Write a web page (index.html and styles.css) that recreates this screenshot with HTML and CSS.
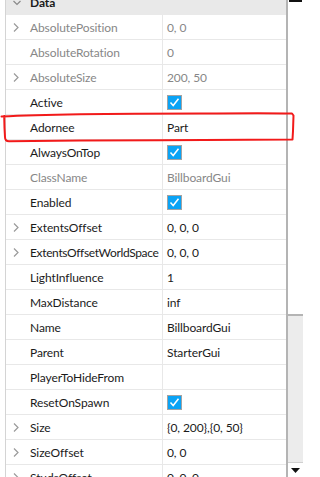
FILE: index.html
```html
<!DOCTYPE html>
<html>
<head>
<meta charset="utf-8">
<link rel="stylesheet" href="styles.css">
</head>
<body>
<div class="window">
  <div class="panel">
    <div class="list">
      <div class="header">
        <span class="chev down"><svg width="8" height="6" viewBox="0 0 8 6"><path d="M0.5 1 L4 4.5 L7.5 1" fill="none" stroke="#8a8a8a" stroke-width="1.2"/></svg></span>
        <span class="hlabel">Data</span>
      </div>
      <div class="row ro"><div class="name"><span class="chev"><svg width="6" height="9" viewBox="0 0 6 9"><path d="M1 0.5 L5 4.5 L1 8.5" fill="none" stroke="#9a9a9a" stroke-width="1.2"/></svg></span>AbsolutePosition</div><div class="val">0, 0</div></div>
      <div class="row ro"><div class="name"><span class="chev"></span>AbsoluteRotation</div><div class="val">0</div></div>
      <div class="row ro"><div class="name"><span class="chev"><svg width="6" height="9" viewBox="0 0 6 9"><path d="M1 0.5 L5 4.5 L1 8.5" fill="none" stroke="#9a9a9a" stroke-width="1.2"/></svg></span>AbsoluteSize</div><div class="val">200, 50</div></div>
      <div class="row"><div class="name"><span class="chev"></span>Active</div><div class="val"><span class="check"><svg width="13" height="13" viewBox="0 0 13 13"><path d="M2.5 6.5 L5.2 9.5 L10.5 2.8" fill="none" stroke="#fff" stroke-width="1.5"/></svg></span></div></div>
      <div class="row"><div class="name"><span class="chev"></span>Adornee</div><div class="val">Part</div></div>
      <div class="row"><div class="name"><span class="chev"></span>AlwaysOnTop</div><div class="val"><span class="check"><svg width="13" height="13" viewBox="0 0 13 13"><path d="M2.5 6.5 L5.2 9.5 L10.5 2.8" fill="none" stroke="#fff" stroke-width="1.5"/></svg></span></div></div>
      <div class="row ro"><div class="name"><span class="chev"></span>ClassName</div><div class="val">BillboardGui</div></div>
      <div class="row"><div class="name"><span class="chev"></span>Enabled</div><div class="val"><span class="check"><svg width="13" height="13" viewBox="0 0 13 13"><path d="M2.5 6.5 L5.2 9.5 L10.5 2.8" fill="none" stroke="#fff" stroke-width="1.5"/></svg></span></div></div>
      <div class="row"><div class="name"><span class="chev"><svg width="6" height="9" viewBox="0 0 6 9"><path d="M1 0.5 L5 4.5 L1 8.5" fill="none" stroke="#9a9a9a" stroke-width="1.2"/></svg></span>ExtentsOffset</div><div class="val">0, 0, 0</div></div>
      <div class="row"><div class="name"><span class="chev"><svg width="6" height="9" viewBox="0 0 6 9"><path d="M1 0.5 L5 4.5 L1 8.5" fill="none" stroke="#9a9a9a" stroke-width="1.2"/></svg></span><span class="tight">ExtentsOffsetWorldSpace</span></div><div class="val">0, 0, 0</div></div>
      <div class="row"><div class="name"><span class="chev"></span>LightInfluence</div><div class="val">1</div></div>
      <div class="row"><div class="name"><span class="chev"></span>MaxDistance</div><div class="val">inf</div></div>
      <div class="row"><div class="name"><span class="chev"></span>Name</div><div class="val">BillboardGui</div></div>
      <div class="row"><div class="name"><span class="chev"></span>Parent</div><div class="val">StarterGui</div></div>
      <div class="row"><div class="name"><span class="chev"></span>PlayerToHideFrom</div><div class="val"></div></div>
      <div class="row"><div class="name"><span class="chev"></span>ResetOnSpawn</div><div class="val"><span class="check"><svg width="13" height="13" viewBox="0 0 13 13"><path d="M2.5 6.5 L5.2 9.5 L10.5 2.8" fill="none" stroke="#fff" stroke-width="1.5"/></svg></span></div></div>
      <div class="row"><div class="name"><span class="chev"><svg width="6" height="9" viewBox="0 0 6 9"><path d="M1 0.5 L5 4.5 L1 8.5" fill="none" stroke="#9a9a9a" stroke-width="1.2"/></svg></span>Size</div><div class="val">{0, 200},{0, 50}</div></div>
      <div class="row"><div class="name"><span class="chev"><svg width="6" height="9" viewBox="0 0 6 9"><path d="M1 0.5 L5 4.5 L1 8.5" fill="none" stroke="#9a9a9a" stroke-width="1.2"/></svg></span>SizeOffset</div><div class="val">0, 0</div></div>
      <div class="row"><div class="name"><span class="chev"><svg width="6" height="9" viewBox="0 0 6 9"><path d="M1 0.5 L5 4.5 L1 8.5" fill="none" stroke="#9a9a9a" stroke-width="1.2"/></svg></span>StudsOffset</div><div class="val">0, 0, 0</div></div>
    </div>
  </div>
  <div class="scrollbar">
    <div class="upcap"></div>
    <div class="track"></div>
    <div class="thumb"></div>
    <div class="downbtn"><svg width="9" height="5" viewBox="0 0 9 5"><path d="M0 0 H9 L4.5 5 Z" fill="#111"/></svg></div>
  </div>
  <svg class="annot" width="303" height="477" viewBox="0 0 303 477"><path d="M1.5 116.5 C40 114.5 120 113.5 200 113.5 C240 113.2 270 113 292 113.5 L293.5 115.5 L293 131 L292.5 139.5 C230 139.8 150 140.3 80 140.6 C50 140.8 25 141.2 9 141.3 Q5 141.3 5 137 L4.5 128 L4.2 116" fill="none" stroke="#f21a1a" stroke-width="2" stroke-linejoin="round" stroke-linecap="round"/></svg>
</div>
</body>
</html>
```

FILE: styles.css
```css
html, body {
  margin: 0;
  padding: 0;
  background: #fff;
}
body {
  width: 303px;
  height: 477px;
  overflow: hidden;
  font-family: "Lato", "Open Sans", sans-serif;
  font-size: 12px;
  letter-spacing: -0.1px;
  color: #1b1b1b;
}
.window {
  position: relative;
  display: flex;
  width: 303px;
  height: 477px;
}
.panel {
  margin-left: 5px;
  width: 282px;
  height: 477px;
  border-left: 1px solid #d4d4d4;
  overflow: hidden;
}
.list {
  margin-top: -10px;
}
.header {
  height: 25px;
  background: #e9e9e9;
  display: flex;
  align-items: center;
}
.hlabel {
  font-weight: bold;
  color: #1b1b1b;
}
.chev {
  width: 24px;
  flex: none;
  display: flex;
  align-items: center;
  justify-content: flex-start;
  padding-left: 7px;
  box-sizing: border-box;
}
.tight {
  letter-spacing: -0.35px;
}
.row {
  height: 25px;
  box-sizing: border-box;
  border-bottom: 1px solid #e8e8e8;
  display: grid;
  grid-template-columns: 157px 1fr;
}
.name {
  display: flex;
  align-items: center;
  border-right: 1px solid #e8e8e8;
  white-space: nowrap;
  overflow: hidden;
}
.val {
  display: flex;
  align-items: center;
  padding-left: 4px;
  white-space: nowrap;
}
.ro .name, .ro .val {
  color: #878787;
}
.check {
  width: 15px;
  height: 15px;
  box-sizing: border-box;
  border: 1px solid #a3a3a3;
  background: #0aa3f5;
  display: flex;
  align-items: center;
  justify-content: center;
}
.scrollbar {
  width: 15px;
  height: 477px;
  border-left: 2px solid #b4b4b4;
  display: flex;
  flex-direction: column;
  position: relative;
}
.upcap {
  height: 2px;
  margin: 0 1px 0 1px;
  background: #111;
}
.track {
  height: 312px;
  background: #fff;
}
.thumb {
  flex: 1;
  background: #ececec;
  border-top: 2px solid #b4b4b4;
  border-bottom: 1px solid #d0d0d0;
}
.downbtn {
  height: 14px;
  display: flex;
  align-items: center;
  justify-content: center;
  background: #fff;
}
.annot {
  position: absolute;
  left: 0;
  top: 0;
  pointer-events: none;
}
```
